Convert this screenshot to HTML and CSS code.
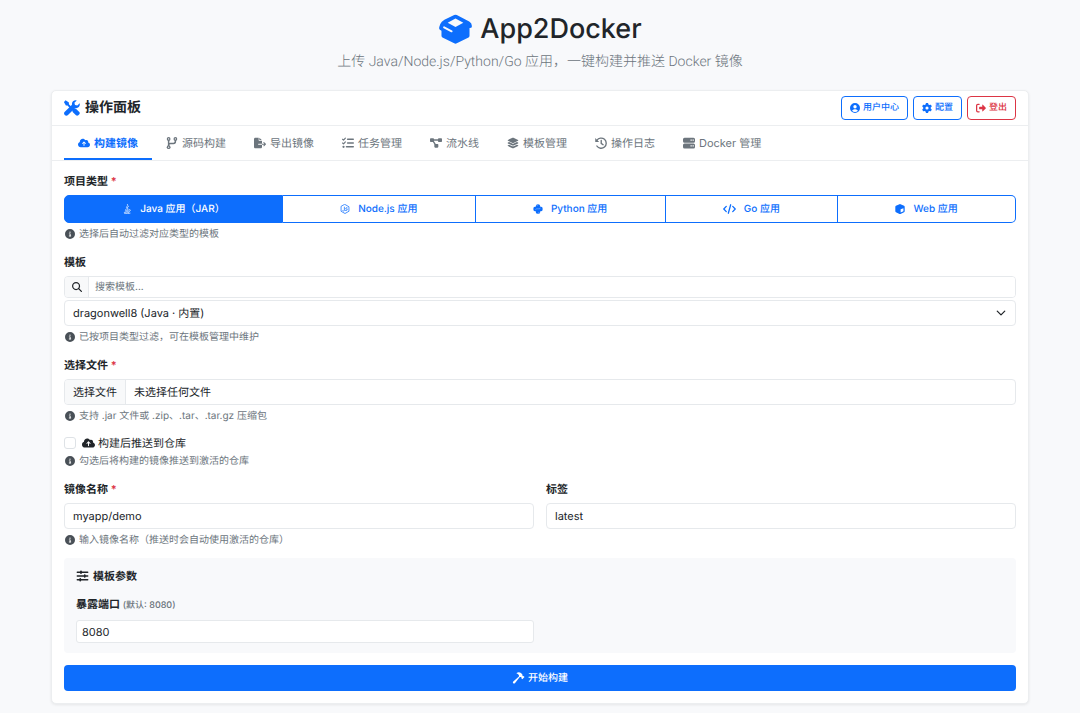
FILE: index.html
```html
<!DOCTYPE html>
<html lang="zh-CN">
	<head>
		<meta charset="utf-8" />
		<meta name="viewport" content="width=device-width, initial-scale=1">
		<title>App2Docker</title>

		<link rel="stylesheet" href="styles.css">
	</head>
	<body>

		<!-- 图标 -->
		<svg class="sprite" aria-hidden="true">
			<symbol id="i-box" viewBox="0 0 106 92">
				<path d="M49 3q4-2 8 0l38 20q8 4 8 12v5q0 3-7 3v24q0 3-3 5L57 90q-4 2-8 0L13 72q-3-2-3-5V51l-5-3q-3-2-2-7 1-9 8-17l8-6z"/>
				<path fill="#f8f9fb" d="M53 14l24 13-24 13-24-13z"/>
				<path fill="none" stroke="#f8f9fb" stroke-width="6" stroke-linecap="round" d="M18 41l23 12"/>
			</symbol>
			<symbol id="i-tools" viewBox="0 0 16 16">
				<path d="M1.6.3L4.9 2.6v1.7l3.2 3.2-1.4 1.4-3.2-3.3H1.9L-.1 2z"/>
				<path d="M9.2 8.4q2-.5 3 .5l3.1 3.1q.9 1.1 0 2.3l-1 1q-1.2.9-2.3 0L8.9 12.200q-1-1.200-.5-3z"/>
				<path d="M15.700 3.200l-2.400 2.400-2.300-.6-.6-2.300L12.800.4Q10.700-.2 9 1.300 7.600 2.700 8 4.800L.8 11.700q-1.500 1.500-.1 3.200 1.700 1.500 3.300 0L11.100 8q2.200.5 3.700-1 1.400-1.600.9-3.800z"/>
			</symbol>
			<symbol id="i-cloud" viewBox="0 0 640 512">
				<path d="M144 480C64.500 480 0 415.500 0 336c0-62.800 40.200-116.200 96.200-135.900c-.1-2.700-.2-5.400-.2-8.100c0-88.400 71.600-160 160-160c59.300 0 111 32.200 138.700 80.200C409.900 102 428.300 96 448 96c53 0 96 43 96 96c0 12.200-2.300 23.800-6.400 34.600C596 238.400 640 290.100 640 352c0 70.700-57.300 128-128 128H144zm79-217c-9.400 9.400-9.400 24.600 0 33.900s24.600 9.400 33.900 0l39-39V392c0 13.300 10.700 24 24 24s24-10.700 24-24V257.900l39 39c9.400 9.400 24.600 9.400 33.900 0s9.400-24.600 0-33.900l-80-80c-9.400-9.400-24.600-9.400-33.900 0l-80 80z"/>
			</symbol>
			<symbol id="i-branch" viewBox="0 0 14 16">
				<path fill="none" stroke="currentColor" stroke-width="2" d="M2.500 3v10M2.500 10.500q0-2 2.500-2h4q2.500 0 2.500-2.500V3"/>
				<circle cx="2.500" cy="2.500" r="2.500"/><circle cx="11.500" cy="2.500" r="2.500"/><circle cx="2.500" cy="13.500" r="2.500"/>
				<g fill="#fff"><circle cx="2.500" cy="2.500" r=".8"/><circle cx="11.500" cy="2.500" r=".8"/><circle cx="2.500" cy="13.500" r=".8"/></g>
			</symbol>
			<symbol id="i-export" viewBox="0 0 576 512">
				<path d="M0 64C0 28.700 28.700 0 64 0H224V128c0 17.700 14.300 32 32 32H384V288H216c-13.300 0-24 10.700-24 24s10.700 24 24 24H384V448c0 35.300-28.700 64-64 64H64c-35.300 0-64-28.700-64-64V64zM384 336V288H494.100l-39-39c-9.400-9.400-9.400-24.600 0-33.900s24.600-9.400 33.900 0l80 80c9.400 9.400 9.400 24.600 0 33.900l-80 80c-9.400 9.400-24.600 9.400-33.900 0s-9.400-24.600 0-33.900l39-39H384zm0-208H256V0L384 128z"/>
			</symbol>
			<symbol id="i-tasks" viewBox="0 0 16 16">
				<path fill="none" stroke="currentColor" stroke-width="1.500" stroke-linecap="round" stroke-linejoin="round" d="M.8 3l1.300 1.300L4.500 1.500M.8 8l1.300 1.300L4.500 6.500"/>
				<path fill="none" stroke="currentColor" stroke-width="2" stroke-linecap="round" d="M7.500 3H15M7.500 8H15M6 13h9"/>
				<circle cx="2" cy="13" r="1.500"/>
			</symbol>
			<symbol id="i-flow" viewBox="0 0 18 16">
				<path fill="none" stroke="currentColor" stroke-width="2" d="M4 3.500h10M4 4l5 8"/>
				<rect y="1" width="6" height="5.500" rx="1.200"/><rect x="12" y="1" width="6" height="5.500" rx="1.200"/><rect x="6.500" y="9.500" width="6" height="5.500" rx="1.200"/>
			</symbol>
			<symbol id="i-layers" viewBox="0 0 576 512">
				<path d="M264.500 5.200c14.900-6.900 32.100-6.900 47 0l218.600 101c8.500 3.900 13.900 12.400 13.900 21.800s-5.400 17.900-13.900 21.800l-218.600 101c-14.900 6.900-32.100 6.900-47 0L45.900 149.800C37.400 145.800 32 137.300 32 128s5.400-17.900 13.900-21.800L264.500 5.200zM476.900 209.600l53.200 24.600c8.500 3.900 13.900 12.400 13.900 21.800s-5.400 17.900-13.900 21.800l-218.600 101c-14.900 6.900-32.100 6.900-47 0L45.900 277.800C37.400 273.800 32 265.300 32 256s5.400-17.900 13.900-21.800l53.200-24.600 152 70.200c23.400 10.800 50.400 10.800 73.800 0l152-70.200zm-152 198.200l152-70.200 53.200 24.600c8.500 3.900 13.900 12.400 13.900 21.800s-5.400 17.900-13.900 21.800l-218.600 101c-14.900 6.900-32.100 6.900-47 0L45.900 405.800C37.400 401.800 32 393.300 32 384s5.400-17.900 13.900-21.800l53.200-24.600 152 70.200c23.400 10.800 50.400 10.800 73.800 0z"/>
			</symbol>
			<symbol id="i-history" viewBox="0 0 16 16">
				<path fill="none" stroke="currentColor" stroke-width="1.800" stroke-linecap="round" stroke-linejoin="round" d="M2.500 4.500a6.800 6.800 0 1 1 0 7.500M8.300 4.500v4l2.500 1.800"/>
				<path d="M.3 1.200v5.300h5.300z"/>
			</symbol>
			<symbol id="i-server" viewBox="0 0 16 16">
				<path fill-rule="evenodd" d="M2 1h12q2 0 2 2v2.500q0 2-2 2H2q-2 0-2-2V3q0-2 2-2zm8 2.400v1.700h1.700V3.400zm2.700 0v1.700h1.700V3.400zM2 8.700h12q2 0 2 2v2.500q0 2-2 2H2q-2 0-2-2v-2.500q0-2 2-2zm8 2.400v1.700h1.700v-1.700zm2.700 0v1.700h1.700v-1.700z"/>
			</symbol>
			<symbol id="i-user" viewBox="0 0 16 16">
				<path fill-rule="evenodd" d="M8 0a8 8 0 1 0 0 16A8 8 0 0 0 8 0zm0 3.300a2.700 2.700 0 1 1 0 5.400 2.700 2.700 0 0 1 0-5.400zM3.300 12.400Q4.500 10 7 10h2q2.500 0 3.700 2.400A6.400 6.400 0 0 1 8 14.500a6.400 6.400 0 0 1-4.700-2.100z"/>
			</symbol>
			<symbol id="i-cog" viewBox="0 0 512 512">
				<path d="M495.900 166.600c3.200 8.700 .5 18.400-6.400 24.600l-43.300 39.400c1.100 8.300 1.700 16.800 1.700 25.400s-.6 17.100-1.700 25.400l43.300 39.400c6.900 6.200 9.600 15.900 6.400 24.600c-4.400 11.900-9.700 23.300-15.800 34.300l-4.700 8.100c-6.600 11-14 21.400-22.100 31.200c-5.900 7.200-15.700 9.600-24.500 6.800l-55.700-17.700c-13.400 10.300-28.200 18.900-44 25.400l-12.500 57.100c-2 9.100-9 16.300-18.200 17.800c-13.800 2.300-28 3.500-42.500 3.500s-28.700-1.200-42.500-3.500c-9.200-1.500-16.200-8.700-18.200-17.800l-12.500-57.100c-15.800-6.500-30.600-15.100-44-25.400L83.100 425.900c-8.800 2.800-18.600 .3-24.500-6.800c-8.100-9.800-15.500-20.200-22.100-31.200l-4.700-8.100c-6.100-11-11.400-22.400-15.800-34.300c-3.200-8.700-.5-18.400 6.400-24.600l43.300-39.400C64.600 273.100 64 264.600 64 256s.6-17.100 1.700-25.400L22.400 191.200c-6.900-6.200-9.600-15.900-6.400-24.600c4.400-11.900 9.700-23.300 15.800-34.300l4.700-8.100c6.600-11 14-21.400 22.100-31.200c5.900-7.200 15.700-9.600 24.500-6.800l55.700 17.700c13.400-10.300 28.200-18.900 44-25.400l12.500-57.100c2-9.100 9-16.300 18.200-17.800C227.300 1.200 241.500 0 256 0s28.700 1.200 42.500 3.500c9.200 1.500 16.200 8.700 18.200 17.800l12.500 57.100c15.800 6.500 30.600 15.100 44 25.400l55.700-17.700c8.800-2.800 18.600-.3 24.500 6.800c8.100 9.800 15.500 20.200 22.100 31.200l4.700 8.100c6.100 11 11.400 22.400 15.800 34.300zM256 336a80 80 0 1 0 0-160 80 80 0 1 0 0 160z"/>
			</symbol>
			<symbol id="i-logout" viewBox="0 0 16 16">
				<path fill="none" stroke="currentColor" stroke-width="2" stroke-linecap="round" d="M5 2H3Q1 2 1 4v8q0 2 2 2h2"/>
				<path d="M10 3.200q0-1.200 1-.5L15.600 7.400q.5.600 0 1.200L11 13.300q-1 .7-1-.5V10H6Q5 10 5 9V7q0-1 1-1h4z"/>
			</symbol>
			<symbol id="i-java" viewBox="0 0 16 16">
				<g fill="none" stroke="currentColor" stroke-width="1" stroke-linecap="round">
					<path d="M8.800.5q1 2-1 3.500-1.800 1.800.4 4M10.700 3.500Q7.500 5 9 6.500q.8.900-.3 2M5 9.200q-1.500.8 3 .8 2.500 0 3-.5M5.500 11.500q2.500.8 4.700.2M3.500 12.800q-2 1 4 1.300 5 0 4.500-1.100M4 15.500q6 .7 9-.7M11.700 9.200q2-.6 1.800 1-.3 1.200-2 1.800"/>
				</g>
			</symbol>
			<symbol id="i-node" viewBox="0 0 16 16">
				<g fill="none" stroke="currentColor" stroke-width="1.200" stroke-linejoin="round" stroke-linecap="round">
					<path d="M8 .8l6.300 3.600v7.200L8 15.200l-6.300-3.600V4.400z"/>
					<path d="M7 5v5q0 1.500-1.500 1.200L4.500 10.700M11.500 6.200Q9 5.300 9 6.900q0 1 1.300 1.200 1.500.2 1.400 1.400-.2 1.500-3 .8"/>
				</g>
			</symbol>
			<symbol id="i-python" viewBox="0 0 16 16">
				<path d="M4.500 3Q4.500.5 8 .5T11.500 3v1.500h1.500q2.500 0 2.500 3.500t-2.500 3.500h-1.500V13q0 2.500-3.500 2.500T4.500 13v-1.500H3Q.5 11.500.5 8T3 4.500h1.500z"/>
				<path fill="none" stroke="#fff" stroke-width=".5" d="M4 9.200q.3-1.500 2-1.500h4q1.600 0 1.900-1.700"/>
				<g fill="#fff"><circle cx="6.500" cy="2.700" r=".6"/><circle cx="9.500" cy="13.300" r=".6"/></g>
			</symbol>
			<symbol id="i-code" viewBox="0 0 20 16">
				<path fill="none" stroke="currentColor" stroke-width="2" stroke-linecap="round" stroke-linejoin="round" d="M5 4L1.200 8 5 12M15 4l3.800 4-3.800 4M11.800 1.500l-3.600 13"/>
			</symbol>
			<symbol id="i-cube" viewBox="0 0 16 16">
				<path fill-rule="evenodd" d="M7.200.3q.8-.4 1.600 0l5.700 2.400q1 .5 1 1.500v7.500q0 1-1 1.600l-5.700 2.500q-.8.300-1.600 0l-5.700-2.500q-1-.6-1-1.600V4.200q0-1 1-1.500zM9 8.500v5.200l4.500-2.200V6.600z"/>
			</symbol>
			<symbol id="i-info" viewBox="0 0 512 512">
				<path d="M256 512A256 256 0 1 0 256 0a256 256 0 1 0 0 512zM216 336h24V272H216c-13.300 0-24-10.700-24-24s10.700-24 24-24h48c13.300 0 24 10.700 24 24v88h8c13.300 0 24 10.700 24 24s-10.700 24-24 24H216c-13.300 0-24-10.700-24-24s10.700-24 24-24zm40-208a32 32 0 1 1 0 64 32 32 0 1 1 0-64z"/>
			</symbol>
			<symbol id="i-search" viewBox="0 0 512 512">
				<path d="M416 208c0 45.900-14.900 88.300-40 122.700L502.600 457.400c12.500 12.500 12.500 32.800 0 45.300s-32.800 12.500-45.300 0L330.700 376c-34.400 25.200-76.800 40-122.700 40C93.100 416 0 322.900 0 208S93.100 0 208 0S416 93.100 416 208zM208 352a144 144 0 1 0 0-288 144 144 0 1 0 0 288z"/>
			</symbol>
			<symbol id="i-chevron" viewBox="0 0 16 16">
				<path fill="none" stroke="currentColor" stroke-width="2" stroke-linecap="round" stroke-linejoin="round" d="M2 5l6 6 6-6"/>
			</symbol>
			<symbol id="i-sliders" viewBox="0 0 16 16">
				<path fill="none" stroke="currentColor" stroke-width="1.800" stroke-linecap="round" d="M1 3h14M1 8h14M1 13h14"/>
				<path fill="none" stroke="currentColor" stroke-width="2.400" stroke-linecap="round" d="M6 2v2M11 7v2M5 12v2"/>
			</symbol>
			<symbol id="i-hammer" viewBox="0 0 16 16">
				<path d="M5.500 1.300Q8.500-.6 11.300 1.400l1.900 1.900v1.500l.8.800.7-.3 1.300 1.300-2.900 2.900-1.300-1.300.3-.8-.9-.9H9.700L3.200 14.900q-1.100 1-2.200.1-1-1.100 0-2.200L8.600 6V4.200Q7.500 2.300 5.500 2z"/>
			</symbol>
		</svg>

		<div class="container">

			<div class="header">
				<h1><svg class="logo"><use href="#i-box"/></svg>App2Docker</h1>
				<p>上传 Java/Node.js/Python/Go 应用，一键构建并推送 Docker 镜像</p>
			</div>

			<div class="card">
				<div class="card-header">
					<h2><svg class="icon icon-lg"><use href="#i-tools"/></svg>操作面板</h2>
					<div class="actions">
						<button type="button" class="btn-sm"><svg class="icon icon-sm"><use href="#i-user"/></svg>用户中心</button>
						<button type="button" class="btn-sm"><svg class="icon icon-sm"><use href="#i-cog"/></svg>配置</button>
						<button type="button" class="btn-sm danger"><svg class="icon icon-sm"><use href="#i-logout"/></svg>登出</button>
					</div>
				</div>

				<nav class="tabs">
					<a href="#" class="active"><svg class="icon"><use href="#i-cloud"/></svg>构建镜像</a>
					<a href="#"><svg class="icon"><use href="#i-branch"/></svg>源码构建</a>
					<a href="#"><svg class="icon"><use href="#i-export"/></svg>导出镜像</a>
					<a href="#"><svg class="icon"><use href="#i-tasks"/></svg>任务管理</a>
					<a href="#"><svg class="icon"><use href="#i-flow"/></svg>流水线</a>
					<a href="#"><svg class="icon"><use href="#i-layers"/></svg>模板管理</a>
					<a href="#"><svg class="icon"><use href="#i-history"/></svg>操作日志</a>
					<a href="#"><svg class="icon"><use href="#i-server"/></svg>Docker 管理</a>
				</nav>

				<form class="card-body">
					<div class="field">
						<div class="label" id="type-label">项目类型 <span class="required">*</span></div>
						<div class="btn-group" role="group" aria-labelledby="type-label">
							<button type="button" class="active"><svg class="icon icon-sm"><use href="#i-java"/></svg>Java 应用（JAR）</button>
							<button type="button"><svg class="icon icon-sm"><use href="#i-node"/></svg>Node.js 应用</button>
							<button type="button"><svg class="icon icon-sm"><use href="#i-python"/></svg>Python 应用</button>
							<button type="button"><svg class="icon"><use href="#i-code"/></svg>Go 应用</button>
							<button type="button"><svg class="icon icon-sm"><use href="#i-cube"/></svg>Web 应用</button>
						</div>
						<div class="help"><svg class="icon icon-sm"><use href="#i-info"/></svg>选择后自动过滤对应类型的模板</div>
					</div>

					<div class="field">
						<label class="label" for="template">模板</label>
						<div class="search">
							<span class="addon"><svg class="icon icon-sm"><use href="#i-search"/></svg></span>
							<input type="text" placeholder="搜索模板..." aria-label="搜索模板">
						</div>
						<div class="select">
							<select id="template" class="control">
								<option>dragonwell8 (Java · 内置)</option>
							</select>
							<svg class="icon icon-sm"><use href="#i-chevron"/></svg>
						</div>
						<div class="help"><svg class="icon icon-sm"><use href="#i-info"/></svg>已按项目类型过滤，可在模板管理中维护</div>
					</div>

					<div class="field">
						<label class="label" for="file">选择文件 <span class="required">*</span></label>
						<div class="file">
							<span class="file-btn">选择文件</span>
							<span class="file-name">未选择任何文件</span>
							<input type="file" id="file">
						</div>
						<div class="help"><svg class="icon icon-sm"><use href="#i-info"/></svg>支持 .jar 文件或 .zip、.tar、.tar.gz 压缩包</div>
					</div>

					<div class="field">
						<div class="check">
							<input type="checkbox" id="push">
							<label for="push"><svg class="icon"><use href="#i-cloud"/></svg>构建后推送到仓库</label>
						</div>
						<div class="help"><svg class="icon icon-sm"><use href="#i-info"/></svg>勾选后将构建的镜像推送到激活的仓库</div>
					</div>

					<div class="row">
						<div>
							<label class="label" for="image">镜像名称 <span class="required">*</span></label>
							<input type="text" class="control" id="image" value="myapp/demo">
							<div class="help"><svg class="icon icon-sm"><use href="#i-info"/></svg>输入镜像名称（推送时会自动使用激活的仓库）</div>
						</div>
						<div>
							<label class="label" for="tag">标签</label>
							<input type="text" class="control" id="tag" value="latest">
						</div>
					</div>

					<div class="params">
						<h3><svg class="icon"><use href="#i-sliders"/></svg>模板参数</h3>
						<div class="row">
							<div>
								<label class="label" for="port">暴露端口 <small>(默认: 8080)</small></label>
								<input type="text" class="control control-sm" id="port" value="8080">
							</div>
						</div>
					</div>

					<button type="submit" class="submit"><svg class="icon"><use href="#i-hammer"/></svg>开始构建</button>
				</form>
			</div>

		</div>

	</body>
</html>
```
FILE: styles.css
```css
* {
	box-sizing: border-box;
}

body {
	margin: 0;
	background-color: #f8f9fb;
	color: #212529;
	font-family: Inter, "Noto Sans CJK SC", sans-serif;
	font-size: 11px;
	line-height: 16px;
	text-rendering: geometricPrecision;
}

h1,
h2,
h3,
p {
	margin: 0;
}

button,
input,
select {
	font: inherit;
	color: inherit;
	text-rendering: inherit;
}

button {
	cursor: pointer;
}

.sprite {
	display: none;
}

.icon {
	width: 13px;
	height: 12px;
	flex: none;
	fill: currentColor;
}

.icon-sm {
	width: 10px;
	height: 10px;
}

.icon-lg {
	width: 16px;
	height: 16px;
}

.container {
	padding: 12px 51px 11px;
}

/* 标题 */
.header {
	margin-bottom: 20px;
	text-align: center;
}

.header h1 {
	display: flex;
	align-items: center;
	justify-content: center;
	gap: 7px;
	margin-bottom: 8px;
	font-size: 27px;
	font-weight: 500;
	line-height: 34px;
}

.logo {
	width: 35px;
	height: 30px;
	fill: #0d6efd;
}

.header p {
	color: #6c757d;
	font-family: Roboto, "Noto Sans CJK SC", sans-serif;
	font-size: 14px;
	font-weight: 300;
}

/* 面板 */
.card {
	background-color: #fff;
	border: 1px solid #eceef0;
	border-radius: 5px;
	box-shadow: 0 1px 3px rgba(0, 0, 0, .08);
}

.card-header {
	display: flex;
	align-items: center;
	justify-content: space-between;
	height: 35px;
	padding: 0 12px;
	border-bottom: 1px solid #eceef0;
}

.card-header h2 {
	display: flex;
	align-items: center;
	gap: 5px;
	font-size: 14px;
	font-weight: 600;
}

.card-header h2 .icon {
	color: #0d6efd;
}

.actions {
	display: flex;
	gap: 5px;
}

.btn-sm {
	display: flex;
	align-items: center;
	gap: 3px;
	height: 24px;
	padding: 0 8px;
	border: 1px solid #0d6efd;
	border-radius: 4px;
	background-color: #fff;
	color: #0d6efd;
	font-size: 9px;
	font-weight: 500;
}

.btn-sm.danger {
	border-color: #dc3545;
	color: #dc3545;
}

.tabs {
	display: flex;
	height: 35px;
	padding: 0 12px;
	border-bottom: 1px solid #eceef0;
}

.tabs a {
	display: flex;
	align-items: center;
	gap: 4px;
	padding: 2px 14px 0;
	border-bottom: 2px solid transparent;
	color: #6c757d;
	text-decoration: none;
}

.tabs a.active {
	border-bottom-color: #0d6efd;
	color: #0d6efd;
	font-weight: 600;
}

.tabs .icon {
	width: 12px;
}

/* 表单 */
.card-body {
	padding: 12px;
}

.field {
	margin-bottom: 12px;
}

.label {
	display: block;
	margin-bottom: 6px;
	font-weight: 600;
}

.label small {
	color: #6c757d;
	font-size: 9px;
	font-weight: 500;
}

.required {
	color: #dc3545;
}

.help {
	display: flex;
	align-items: center;
	gap: 4px;
	margin-top: 3px;
	padding-left: 1px;
	color: #6c757d;
	font-size: 10px;
}

.help .icon {
	color: #495057;
}

.btn-group {
	display: flex;
}

.btn-group button {
	display: flex;
	flex: 1 1 auto;
	align-items: center;
	justify-content: center;
	gap: 8px;
	height: 28px;
	border: 1px solid #0d6efd;
	border-left-width: 0;
	background-color: #fff;
	color: #0d6efd;
	font-size: 10px;
	font-weight: 500;
}

.btn-group button:first-child {
	border-left-width: 1px;
	border-radius: 5px 0 0 5px;
}

.btn-group button:last-child {
	border-radius: 0 5px 5px 0;
}

.btn-group button.active {
	background-color: #0d6efd;
	color: #fff;
}

.control {
	display: block;
	width: 100%;
	height: 26px;
	padding: 0 8px;
	border: 1px solid #e6e9ec;
	border-radius: 4px;
	background-color: #fff;
}

.control-sm {
	height: 23px;
	padding: 0 5px;
	border-radius: 3px;
}

.search {
	display: flex;
	height: 22px;
	margin-bottom: 2px;
	border: 1px solid #e6e9ec;
	border-radius: 4px;
	overflow: hidden;
}

.addon {
	display: flex;
	align-items: center;
	justify-content: center;
	width: 24px;
	border-right: 1px solid #e6e9ec;
	background-color: #f8f9fa;
}

.search input {
	flex: 1;
	min-width: 0;
	padding: 0 6px;
	border: 0;
	font-size: 10px;
}

.search input::placeholder {
	color: #6c757d;
}

.select {
	position: relative;
}

.select select {
	appearance: none;
}

.select .icon {
	position: absolute;
	top: 8px;
	right: 10px;
	pointer-events: none;
}

.file {
	position: relative;
	display: flex;
	height: 26px;
	border: 1px solid #e6e9ec;
	border-radius: 4px;
	line-height: 24px;
	overflow: hidden;
}

.file-btn {
	padding: 0 8px;
	border-right: 1px solid #e6e9ec;
	background-color: #f8f9fa;
}

.file-name {
	padding: 0 8px;
}

/* 透明的原生控件盖在上面 */
.file input {
	position: absolute;
	top: 0;
	left: 0;
	width: 100%;
	height: 100%;
	opacity: 0;
}

.check {
	display: flex;
	align-items: center;
	gap: 6px;
	height: 14px;
}

.check input {
	appearance: none;
	width: 12px;
	height: 12px;
	margin: 0;
	border: 1px solid #dee2e6;
	border-radius: 3px;
}

.check input:checked {
	background-color: #0d6efd;
}

.check label {
	display: flex;
	align-items: center;
	gap: 3px;
}

.row {
	display: grid;
	grid-template-columns: 1fr 1fr;
	gap: 12px;
}

.params {
	margin: 10px 0 12px;
	padding: 10px 12px;
	border-radius: 4px;
	background-color: #f8f9fb;
}

.params h3 {
	display: flex;
	align-items: center;
	gap: 4px;
	margin-bottom: 12px;
	font-size: 11px;
	font-weight: 600;
}

.submit {
	display: flex;
	align-items: center;
	justify-content: center;
	gap: 3px;
	width: 100%;
	height: 26px;
	border: 0;
	border-radius: 4px;
	background-color: #0d6efd;
	color: #fff;
	font-size: 10px;
	font-weight: 500;
}
```
